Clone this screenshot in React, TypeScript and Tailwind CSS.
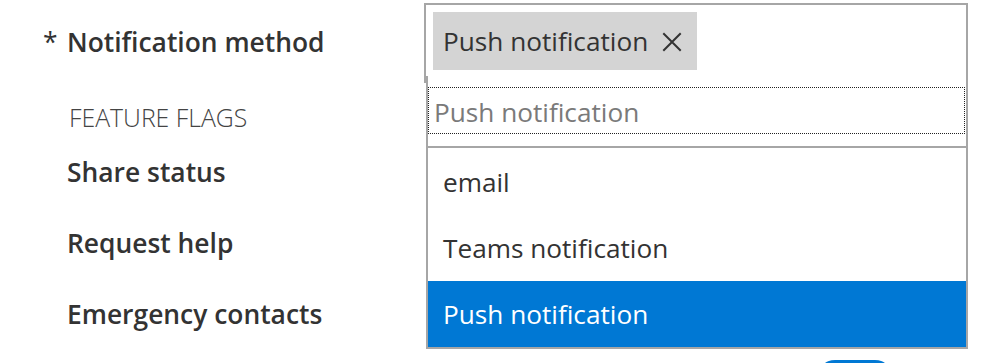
import React from "react";

const options = ["email", "Teams notification", "Push notification"];
const selected = "Push notification";

const CloseIcon = () => (
  <svg width="20" height="20" viewBox="0 0 20 20" fill="none" stroke="#333333" strokeWidth="2" strokeLinecap="square">
    <path d="M2 2 L18 18 M18 2 L2 18" />
  </svg>
);

const FlagRow = ({ label }: { label: string }) => (
  <div className="flex h-[71px] items-center">
    <div className="w-[424px] pl-[67px] text-[26.4px] font-semibold text-[#333333]">{label}</div>
  </div>
);

export default function App() {
  return (
    <div className="relative h-[363px] w-[986px] overflow-hidden bg-white font-['Open_Sans',sans-serif] text-[#333333]">
      {/* Notification method */}
      <div className="flex pt-[3px]">
        <div className="flex h-[80px] w-[424px] items-center pl-[43px] text-[26.4px]">
          <span className="w-[24px] font-normal">*</span>
          <span className="font-semibold">Notification method</span>
        </div>
        <div className="h-[80px] w-[544px] border-2 border-[#a6a6a6] bg-white pl-[7px] pt-[7px]">
          <div className="flex h-[58px] w-[264px] items-center justify-between bg-[#d4d4d4] pl-[10px] pr-[15px] pt-[2px] text-[26.2px]">
            <span>Push notification</span>
            <CloseIcon />
          </div>
        </div>
      </div>

      {/* Feature flags */}
      <div className="flex h-[54px] items-end pb-[1px] pl-[69px] text-[24.8px] font-light uppercase text-[#444444]">
        Feature flags
      </div>
      <FlagRow label="Share status" />
      <FlagRow label="Request help" />
      <FlagRow label="Emergency contacts" />
      <div className="flex">
        <div className="w-[817px]" />
        <div className="mt-[10px] h-[36px] w-[76px] rounded-full bg-[#0078d4]" />
      </div>

      {/* Dropdown popup */}
      <div className="absolute left-[426px] top-[76px] flex h-[273px] w-[542px] flex-col border-x-2 border-b-2 border-[#a6a6a6] bg-white">
        <div className="mt-[11px] flex h-[47px] w-[537px] items-center border border-dotted border-[#222222] pl-[5px] pt-[4px] text-[26.2px] text-[#7a7a7a]">
          Push notification
        </div>
        <div className="mt-[12px] h-[2px] w-full bg-[#a6a6a6]" />
        {options.map((opt) => (
          <div
            key={opt}
            className={`flex flex-1 items-center pl-[15px] pt-[2px] text-[26.2px] ${
              opt === selected ? "bg-[#0078d4] text-white" : "text-[#333333]"
            }`}
          >
            {opt}
          </div>
        ))}
      </div>
    </div>
  );
}
